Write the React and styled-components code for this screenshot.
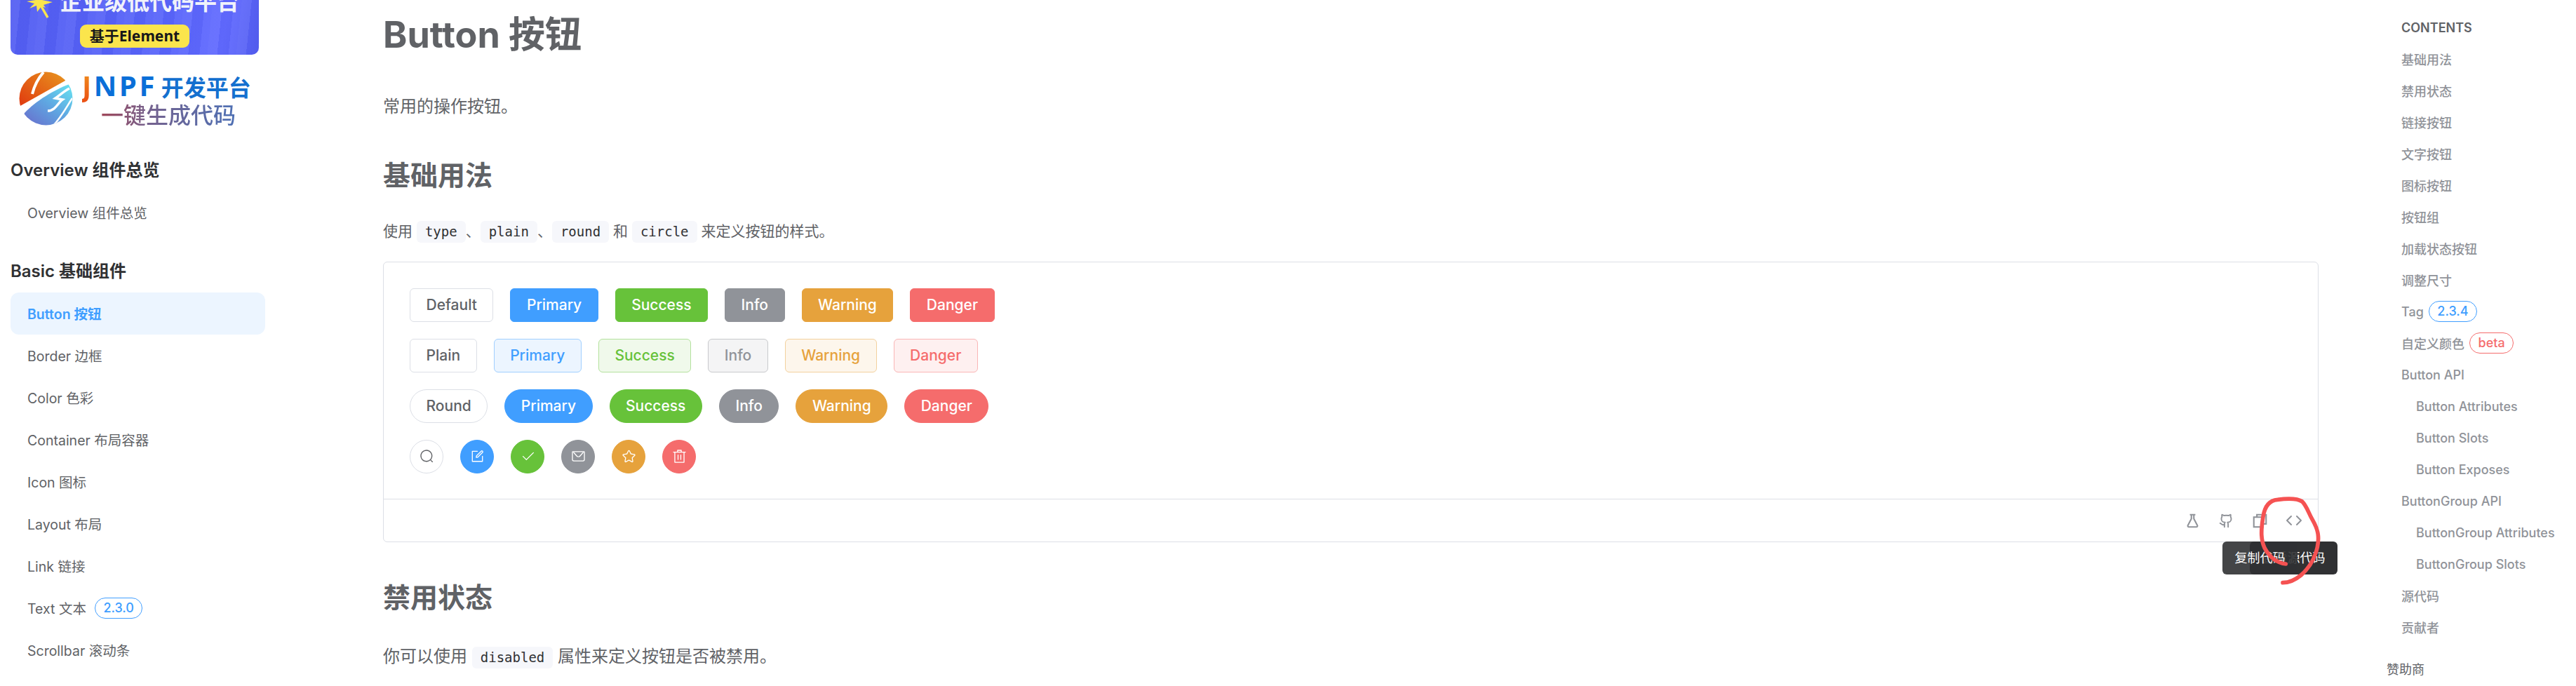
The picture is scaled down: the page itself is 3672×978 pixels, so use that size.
import React from "react";
import styled, { createGlobalStyle } from "styled-components";
import { Github, Code } from "lucide-react";

const Global = createGlobalStyle`
  html, body { margin: 0; padding: 0; background: #fff; }
  body { font-family: Inter, "Noto Sans CJK SC", sans-serif; color: #606266; }
  * { box-sizing: border-box; }
`;

const Page = styled.div`
  display: flex;
  width: 3672px;
  height: 978px;
  overflow: hidden;
  background: #fff;
`;

/* ---------- left sidebar ---------- */
const Sidebar = styled.aside`
  flex: none;
  width: 546px;
  padding-left: 15px;
`;
const Banner = styled.div`
  position: relative;
  width: 354px;
  height: 78px;
  overflow: hidden;
  border-radius: 0 0 10px 10px;
  background:
    repeating-linear-gradient(96deg, rgba(255,255,255,.05) 0 14px, rgba(30,40,190,.07) 14px 30px, rgba(255,255,255,.03) 30px 41px),
    linear-gradient(100deg, #5560f2 0%, #5a66fa 60%, #636cff 85%, #555ff0 100%);
  display: flex;
  flex-direction: column;
  align-items: center;
`;
const BannerTitle = styled.div`
  margin-top: -15px;
  padding-left: 42px;
  font-size: 32px;
  line-height: 36px;
  font-weight: 700;
  white-space: nowrap;
  color: #f0f2fa;
`;
const BannerPill = styled.div`
  margin-top: 14px;
  width: 156px;
  height: 33px;
  border-radius: 9px;
  background: #fbe54c;
  color: #17171a;
  font-size: 21px;
  line-height: 33px;
  font-weight: 700;
  text-align: center;
  white-space: nowrap;
  font-family: "Noto Sans", "Noto Sans CJK SC", sans-serif;
`;
const Spark = styled.svg`
  position: absolute;
  left: 21px;
  top: 0;
`;
const Logo = styled.div`
  display: flex;
  gap: 12px;
  height: 134.5px;
  padding: 24px 0 0 12px;
`;
const LogoMark = styled.svg`
  flex: none;
  width: 78px;
  height: 78px;
`;
const LogoText = styled.div`
  display: flex;
  flex-direction: column;
  align-items: center;
`;
const LogoTop = styled.div`
  display: flex;
  align-items: center;
  height: 40px;
  white-space: nowrap;
`;
const LogoLatin = styled.span`
  font-size: 40px;
  line-height: 40px;
  font-weight: 700;
  letter-spacing: 3.5px;
  color: #0a6fd8;
  font-family: "Open Sans", sans-serif;
`;
const LogoJ = styled.span`
  background: linear-gradient(180deg, #f19a1f, #ea4a12);
  -webkit-background-clip: text;
  background-clip: text;
  color: transparent;
`;
const LogoCn = styled.span`
  margin-left: 6px;
  font-family: "Noto Sans CJK SC", sans-serif;
  font-size: 32px;
  line-height: 40px;
  font-weight: 700;
  letter-spacing: 0;
  color: #1470cf;
`;
const LogoBottom = styled.div`
  margin-top: 3px;
  margin-left: 5px;
  font-size: 32px;
  line-height: 40px;
  font-weight: 500;
  white-space: nowrap;
  background: linear-gradient(90deg, #a0485a, #75628e 35%, #4e70b4);
  -webkit-background-clip: text;
  background-clip: text;
  color: transparent;
`;
const NavGroup = styled.div`
  width: 363px;
  margin-bottom: 24px;
`;
const NavTitle = styled.div`
  height: 60px;
  font-size: 24px;
  line-height: 60px;
  font-weight: 600;
  color: #303133;
  white-space: nowrap;
`;
const NavItem = styled.div`
  display: flex;
  align-items: center;
  gap: 12px;
  height: 60px;
  padding-left: 24px;
  border-radius: 12px;
  font-size: 19.5px;
  font-weight: ${(p) => (p.$active ? 600 : 400)};
  color: ${(p) => (p.$active ? "#409eff" : "#606266")};
  background: ${(p) => (p.$active ? "#ecf5ff" : "transparent")};
  white-space: nowrap;
`;
const Badge = styled.span`
  display: inline-block;
  height: 30px;
  padding: 0 11.5px;
  border: 1px solid ${(p) => p.$color};
  border-radius: 15px;
  color: ${(p) => p.$color};
  font-size: 18px;
  line-height: 27px;
  font-weight: 500;
  background: #fff;
`;

/* ---------- main article ---------- */
const Main = styled.main`
  flex: none;
  width: 2759px;
`;
const H1 = styled.h1`
  margin: 0;
  height: 100px;
  font-size: 52px;
  line-height: 100px;
  font-weight: 700;
  color: #606266;
`;
const Lead = styled.p`
  margin: 22px 0 38px;
  font-size: 24px;
  line-height: 60px;
  color: #606266;
`;
const H2 = styled.h2`
  margin: 0 0 ${(p) => p.$after}px;
  font-size: 39px;
  line-height: 60px;
  font-weight: 700;
  color: #606266;
`;
const Para = styled.p`
  margin: 0;
  font-size: ${(p) => p.$size}px;
  line-height: 42px;
  color: #606266;
  white-space: nowrap;
`;
const InlineCode = styled.code`
  display: inline-block;
  height: 31px;
  padding: 0 12px;
  border-radius: 6px;
  background: #f6f7fb;
  font-family: "DejaVu Sans Mono", monospace;
  font-size: 19px;
  line-height: 31px;
  color: #303133;
`;
const Demo = styled.section`
  width: 2759px;
  height: 400px;
  margin: 22px 0 49px;
  border: 1.5px solid #dcdfe6;
  border-radius: 6px;
`;
const DemoBody = styled.div`
  display: flex;
  flex-direction: column;
  gap: 24px;
  height: 338px;
  padding: 36.5px 37px;
  border-bottom: 1.5px solid #dcdfe6;
`;
const Row = styled.div`
  display: flex;
  gap: 24px;
`;
const palette = {
  default: { main: "#606266", border: "#dcdfe6", light: "#fff" },
  primary: { main: "#409eff", border: "#a0cfff", light: "#ecf5ff" },
  success: { main: "#67c23a", border: "#b3e19d", light: "#f0f9eb" },
  info: { main: "#909399", border: "#c8c9cc", light: "#f4f4f5" },
  warning: { main: "#e6a23c", border: "#f3d19e", light: "#fdf6ec" },
  danger: { main: "#f56c6c", border: "#fab6b6", light: "#fef0f0" },
};
const Btn = styled.button`
  flex: none;
  height: 48px;
  width: ${(p) => (p.$circle ? "48px" : "auto")};
  padding: ${(p) => (p.$circle ? "0" : "0 22.5px")};
  display: inline-flex;
  align-items: center;
  justify-content: center;
  border-radius: ${(p) => (p.$circle || p.$round ? "24px" : "6px")};
  font-family: inherit;
  font-size: 21px;
  font-weight: 500;
  ${({ $type, $plain }) => {
    const c = palette[$type];
    if ($type === "default")
      return `background:#fff;color:#606266;border:1.5px solid #dcdfe6;`;
    if ($plain)
      return `background:${c.light};color:${c.main};border:1.5px solid ${c.border};`;
    return `background:${c.main};color:#fff;border:1.5px solid ${c.main};`;
  }}
  svg { width: 21px; height: 21px; fill: currentColor; display: block; }
`;
const Toolbar = styled.div`
  position: relative;
  display: flex;
  justify-content: flex-end;
  align-items: center;
  gap: 24px;
  height: 60px;
  padding-right: 22.5px;
  color: #909399;
`;
const ToolIcon = styled.span`
  width: 24px;
  height: 24px;
  display: flex;
  align-items: center;
  justify-content: center;
`;
const Tooltip = styled.div`
  position: absolute;
  top: 60px;
  left: ${(p) => p.$left}px;
  height: 47px;
  padding: 0 17.5px;
  border-radius: 6px;
  background: ${(p) => p.$bg};
  color: #fff;
  font-size: 18px;
  line-height: 47px;
  white-space: nowrap;
`;
const Scribble = styled.svg`
  position: absolute;
  left: 2533px;
  top: -32px;
  width: 300px;
  height: 200px;
  pointer-events: none;
`;

/* ---------- table of contents ---------- */
const Toc = styled.nav`
  flex: none;
  margin-left: 97px;
  width: 270px;
  padding-top: 16.5px;
`;
const TocHead = styled.div`
  height: 45px;
  padding-left: 21px;
  font-size: 18px;
  line-height: 45px;
  font-weight: 600;
  color: #606266;
`;
const TocItem = styled.div`
  display: flex;
  align-items: center;
  gap: 7px;
  height: 45px;
  padding-left: ${(p) => (p.$sub ? 42 : 21)}px;
  font-size: 18px;
  font-weight: 500;
  color: #909399;
  white-space: nowrap;
`;
const TocSponsor = styled.div`
  margin-top: 23.5px;
  font-size: 18px;
  line-height: 30px;
  color: #606266;
`;

const EP = {
  search: ["m795.904 750.72 124.992 124.928a32 32 0 0 1-45.248 45.248L750.656 795.904a416 416 0 1 1 45.248-45.248zM480 832a352 352 0 1 0 0-704 352 352 0 0 0 0 704z"],
  edit: [
    "M832 512a32 32 0 1 1 64 0v352a32 32 0 0 1-32 32H160a32 32 0 0 1-32-32V160a32 32 0 0 1 32-32h352a32 32 0 0 1 0 64H192v640h640V512z",
    "m469.952 554.24 52.8-7.552L847.104 222.4a32 32 0 1 0-45.248-45.248L477.44 501.44l-7.552 52.8zm422.4-422.4a96 96 0 0 1 0 135.808l-331.84 331.84a32 32 0 0 1-18.112 9.088L436.8 623.68a32 32 0 0 1-36.224-36.224l15.104-105.6a32 32 0 0 1 9.024-18.112l331.904-331.84a96 96 0 0 1 135.744 0z",
  ],
  check: ["M406.656 706.944 195.84 496.256a32 32 0 1 0-45.248 45.248l256 256 512-512a32 32 0 0 0-45.248-45.248L406.592 706.944z"],
  message: [
    "M128 224v512a64 64 0 0 0 64 64h640a64 64 0 0 0 64-64V224H128zm0-64h768a64 64 0 0 1 64 64v512a128 128 0 0 1-128 128H192A128 128 0 0 1 64 736V224a64 64 0 0 1 64-64z",
    "M904 224 656.512 506.88a192 192 0 0 1-289.024 0L120 224h784zm-698.944 0 210.56 240.704a128 128 0 0 0 192.704 0L818.944 224H205.056z",
  ],
  star: ["m512 747.84 228.16 119.936a6.4 6.4 0 0 0 9.28-6.72l-43.52-254.08 184.512-179.904a6.4 6.4 0 0 0-3.52-10.88l-255.104-37.12L517.76 147.904a6.4 6.4 0 0 0-11.52 0L392.192 379.072l-255.104 37.12a6.4 6.4 0 0 0-3.52 10.88L318.08 606.976l-43.584 254.08a6.4 6.4 0 0 0 9.28 6.72L512 747.84zM313.6 924.48a70.4 70.4 0 0 1-102.144-74.24l37.888-220.928L88.96 472.96A70.4 70.4 0 0 1 128 352.896l221.76-32.256 99.2-200.96a70.4 70.4 0 0 1 126.208 0l99.2 200.96 221.824 32.256a70.4 70.4 0 0 1 39.04 120.064L774.72 629.376l37.888 220.928a70.4 70.4 0 0 1-102.144 74.24L512 820.096l-198.4 104.32z"],
  del: ["M160 256H96a32 32 0 0 1 0-64h256V95.936a32 32 0 0 1 32-32h256a32 32 0 0 1 32 32V192h256a32 32 0 1 1 0 64h-64v672a32 32 0 0 1-32 32H192a32 32 0 0 1-32-32V256zm448-64v-64H416v64h192zM224 896h576V256H224v640zm192-128a32 32 0 0 1-32-32V416a32 32 0 0 1 64 0v320a32 32 0 0 1-32 32zm192 0a32 32 0 0 1-32-32V416a32 32 0 0 1 64 0v320a32 32 0 0 1-32 32z"],
};
const EpIcon = ({ name }) => (
  <svg viewBox="0 0 1024 1024">
    {EP[name].map((d) => (
      <path key={d} d={d} />
    ))}
  </svg>
);

const FlaskIcon = () => (
  <svg width="21" height="21" viewBox="0 0 24 24" fill="none" stroke="currentColor" strokeWidth="2.4" strokeLinejoin="round">
    <path d="M7.5 2h9M10 2v6.5L4.3 19.5A1.7 1.7 0 0 0 5.8 22h12.4a1.7 1.7 0 0 0 1.5-2.5L14 8.5V2" />
  </svg>
);
const CopyIcon = () => (
  <svg width="21" height="21" viewBox="0 0 24 24" fill="none" stroke="currentColor" strokeWidth="2.4">
    <rect x="2" y="6" width="15" height="16" />
    <path d="M7 6V2h15v15h-5" />
  </svg>
);

const types = ["primary", "success", "info", "warning", "danger"];
const title = (t) => t[0].toUpperCase() + t.slice(1);
const circles = [
  ["default", "search"],
  ["primary", "edit"],
  ["success", "check"],
  ["info", "message"],
  ["warning", "star"],
  ["danger", "del"],
];
const navItems = ["Border 边框", "Color 色彩", "Container 布局容器", "Icon 图标", "Layout 布局", "Link 链接"];
const tocTop = ["基础用法", "禁用状态", "链接按钮", "文字按钮", "图标按钮", "按钮组", "加载状态按钮", "调整尺寸"];

export default function App() {
  return (
    <Page>
      <Global />
      <Sidebar>
        <Banner>
          <BannerTitle>企业级低代码平台</BannerTitle>
          <BannerPill>基于Element</BannerPill>
          <Spark width="42" height="28" viewBox="0 0 42 28">
            <path d="M2 2 15 0 24 0 39 3 26 7 29 11 23 9 17 17 16 8 6 12 13 5Z" fill="#fbe54c" />
            <path d="M20 4 32 25" stroke="#fbe54c" strokeWidth="3.5" />
          </Spark>
        </Banner>
        <Logo>
          <LogoMark viewBox="0 0 78 78">
            <defs>
              <linearGradient id="lo" x1="0" y1="1" x2="1" y2="0">
                <stop offset="0" stopColor="#e0380f" />
                <stop offset="1" stopColor="#e8981f" />
              </linearGradient>
              <linearGradient id="lb" x1="0" y1="1" x2="1" y2="0">
                <stop offset="0" stopColor="#6a62c8" />
                <stop offset="0.55" stopColor="#5fa8e2" />
                <stop offset="1" stopColor="#68e8f2" />
              </linearGradient>
              <clipPath id="ball">
                <circle cx="38.5" cy="38.5" r="38" />
              </clipPath>
            </defs>
            <g clipPath="url(#ball)">
              <path d="M0 50 66 13V-2H0Z" fill="url(#lo)" />
              <path d="M19 32C22 20 28 9 35 1" fill="none" stroke="#fff" strokeWidth="4" />
              <path d="M8 59C24 42 50 26 72 18L80 18V80H0Z" fill="url(#lb)" />
              <path d="M41 56C52 56 56 44 62 40L52 38C58 34 64 28 72 24" fill="none" stroke="#fff" strokeWidth="3.5" />
              <path d="M48 78C60 66 68 50 76 38" fill="none" stroke="#fff" strokeWidth="2.5" />
            </g>
          </LogoMark>
          <LogoText>
            <LogoTop>
              <LogoLatin>
                <LogoJ>J</LogoJ>NPF
                <LogoCn>开发平台</LogoCn>
              </LogoLatin>
            </LogoTop>
            <LogoBottom>一键生成代码</LogoBottom>
          </LogoText>
        </Logo>
        <NavGroup>
          <NavTitle>Overview 组件总览</NavTitle>
          <NavItem>Overview 组件总览</NavItem>
        </NavGroup>
        <NavGroup>
          <NavTitle>Basic 基础组件</NavTitle>
          <NavItem $active>Button 按钮</NavItem>
          {navItems.map((t) => (
            <NavItem key={t}>{t}</NavItem>
          ))}
          <NavItem>
            Text 文本 <Badge $color="#409eff">2.3.0</Badge>
          </NavItem>
          <NavItem>Scrollbar 滚动条</NavItem>
        </NavGroup>
      </Sidebar>

      <Main>
        <H1>Button 按钮</H1>
        <Lead>常用的操作按钮。</Lead>
        <H2 $after={29}>基础用法</H2>
        <Para $size={21}>
          使用 <InlineCode>type</InlineCode>、<InlineCode>plain</InlineCode>、<InlineCode>round</InlineCode> 和{" "}
          <InlineCode>circle</InlineCode> 来定义按钮的样式。
        </Para>
        <Demo>
          <DemoBody>
            <Row>
              <Btn $type="default">Default</Btn>
              {types.map((t) => (
                <Btn key={t} $type={t}>{title(t)}</Btn>
              ))}
            </Row>
            <Row>
              <Btn $type="default">Plain</Btn>
              {types.map((t) => (
                <Btn key={t} $type={t} $plain>{title(t)}</Btn>
              ))}
            </Row>
            <Row>
              <Btn $type="default" $round>Round</Btn>
              {types.map((t) => (
                <Btn key={t} $type={t} $round>{title(t)}</Btn>
              ))}
            </Row>
            <Row>
              {circles.map(([t, i]) => (
                <Btn key={i} $type={t} $circle><EpIcon name={i} /></Btn>
              ))}
            </Row>
          </DemoBody>
          <Toolbar>
            <ToolIcon><FlaskIcon /></ToolIcon>
            <ToolIcon><Github size={21} strokeWidth={2.2} /></ToolIcon>
            <ToolIcon><CopyIcon /></ToolIcon>
            <ToolIcon><Code size={24} strokeWidth={2} /></ToolIcon>
            <Tooltip $left={2660} $bg="#303133">查看源代码</Tooltip>
            <Tooltip $left={2621} $bg="rgba(48,49,51,.9)">复制代码</Tooltip>
            <Scribble viewBox="0 0 900 600">
              <path
                d="M535 372C500 368 470 350 445 305 428 270 428 230 438 170 444 130 462 100 500 97 540 92 585 92 605 105 625 125 630 150 650 185 670 220 680 250 670 300 660 345 640 385 600 420 570 445 545 452 522 452"
                fill="none"
                stroke="#f55252"
                strokeWidth="17"
                strokeLinecap="round"
                strokeLinejoin="round"
              />
            </Scribble>
          </Toolbar>
        </Demo>
        <H2 $after={33}>禁用状态</H2>
        <Para $size={24}>
          你可以使用 <InlineCode>disabled</InlineCode> 属性来定义按钮是否被禁用。
        </Para>
      </Main>

      <Toc>
        <TocHead>CONTENTS</TocHead>
        {tocTop.map((t) => (
          <TocItem key={t}>{t}</TocItem>
        ))}
        <TocItem>Tag <Badge $color="#409eff">2.3.4</Badge></TocItem>
        <TocItem>自定义颜色 <Badge $color="#f56c6c">beta</Badge></TocItem>
        <TocItem>Button API</TocItem>
        <TocItem $sub>Button Attributes</TocItem>
        <TocItem $sub>Button Slots</TocItem>
        <TocItem $sub>Button Exposes</TocItem>
        <TocItem>ButtonGroup API</TocItem>
        <TocItem $sub>ButtonGroup Attributes</TocItem>
        <TocItem $sub>ButtonGroup Slots</TocItem>
        <TocItem>源代码</TocItem>
        <TocItem>贡献者</TocItem>
        <TocSponsor>赞助商</TocSponsor>
      </Toc>
    </Page>
  );
}
